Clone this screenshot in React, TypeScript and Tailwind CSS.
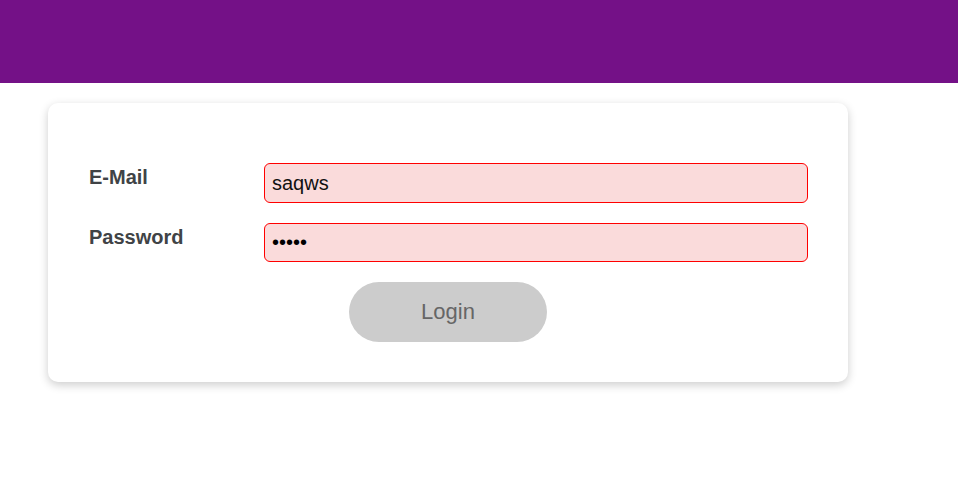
export default function App() {
  return (
    <div className="min-h-screen bg-white font-['Liberation_Sans',Arial,sans-serif]">
      <header className="h-[83px] bg-[#741187]" />
      <main className="pt-5 pl-12">
        <form
          className="w-[800px] rounded-[10px] bg-white pt-[60px] pb-[40px] pl-[41px] pr-[40px] shadow-[0_3px_10px_rgba(0,0,0,0.2)]"
          onSubmit={(e) => e.preventDefault()}
        >
          <div className="flex flex-col gap-5">
            <div className="flex">
              <label className="w-[175px] pt-[3px] text-xl font-bold leading-[23px] text-[#404346]">
                E-Mail
              </label>
              <input
                type="text"
                defaultValue="saqws"
                className="h-10 flex-1 rounded-md border border-[#ff0000] bg-[#fadbdb] px-[7px] text-xl text-[#111] outline-none"
              />
            </div>
            <div className="flex">
              <label className="w-[175px] pt-[3px] text-xl font-bold leading-[23px] text-[#404346]">
                Password
              </label>
              <input
                type="password"
                defaultValue="saqws"
                className="h-[39px] flex-1 rounded-md border border-[#ff0000] bg-[#fadbdb] px-[7px] text-xl text-black outline-none"
              />
            </div>
          </div>
          <div className="mt-5 flex pl-[260px]">
            <button
              type="submit"
              className="h-[60px] w-[198px] rounded-full bg-[#cccccc] pb-px text-[22px] text-[#666666]"
            >
              Login
            </button>
          </div>
        </form>
      </main>
    </div>
  );
}
